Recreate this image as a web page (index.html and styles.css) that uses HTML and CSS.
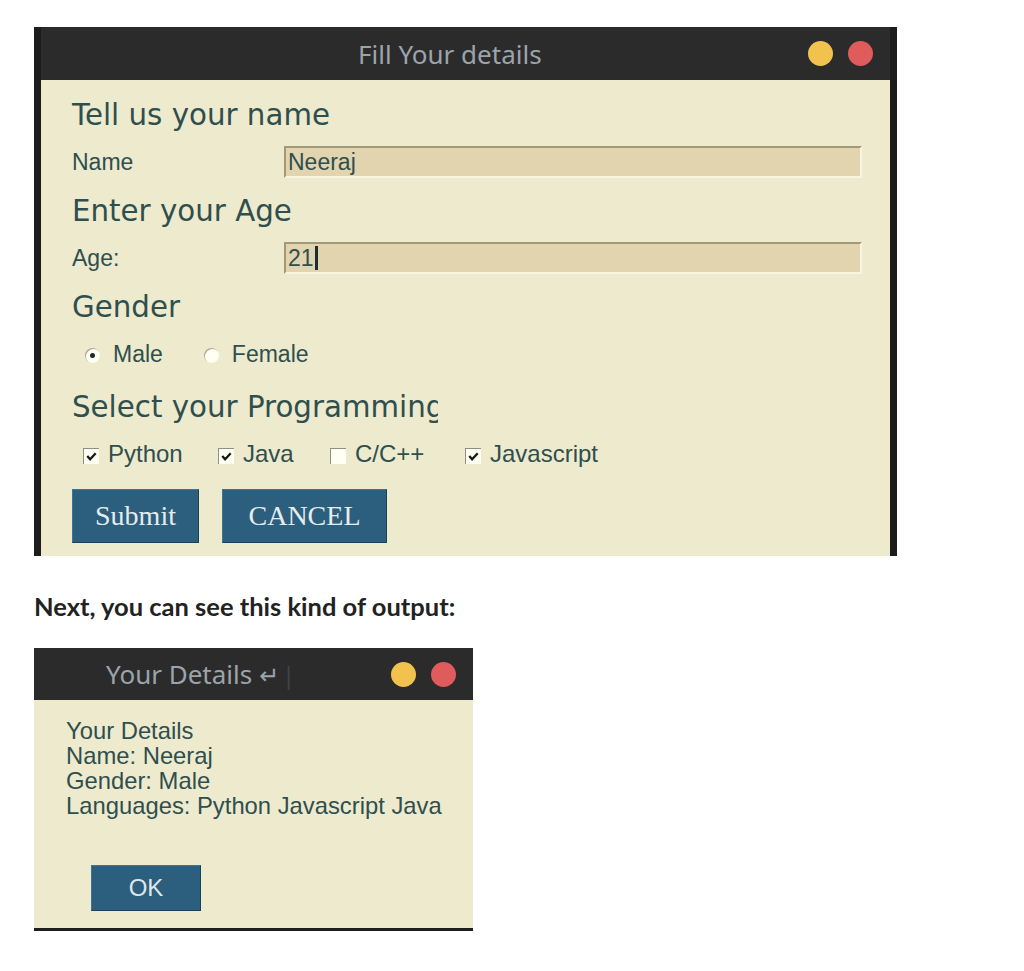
FILE: index.html
```html
<!DOCTYPE html>
<html lang="en">
<head>
    <meta charset="UTF-8">
    <title>Fill Your details</title>
    <link rel="stylesheet" href="styles.css">
</head>
<body>
    <div class="page">
        <div class="window main-window">
            <div class="titlebar">
                <span class="title">Fill Your details</span>
                <span class="dots"><i class="dot yellow"></i><i class="dot red"></i></span>
            </div>
            <div class="form">
                <div class="heading">Tell us your name</div>
                <div class="row">
                    <span class="label">Name</span>
                    <div class="entry">Neeraj</div>
                </div>

                <div class="heading">Enter your Age</div>
                <div class="row">
                    <span class="label">Age:</span>
                    <div class="entry">21<span class="caret"></span></div>
                </div>

                <div class="heading">Gender</div>
                <div class="row radios">
                    <label class="option"><span class="radio checked"></span>Male</label>
                    <label class="option"><span class="radio"></span>Female</label>
                </div>

                <div class="heading clipped">Select your Programming</div>
                <div class="row checks">
                    <label class="option"><span class="check on"><svg viewBox="0 0 16 16"><path d="M3.5 7.5 L6.5 11 L12.5 4.5"/></svg></span>Python</label>
                    <label class="option"><span class="check on"><svg viewBox="0 0 16 16"><path d="M3.5 7.5 L6.5 11 L12.5 4.5"/></svg></span>Java</label>
                    <label class="option"><span class="check"></span>C/C++</label>
                    <label class="option"><span class="check on"><svg viewBox="0 0 16 16"><path d="M3.5 7.5 L6.5 11 L12.5 4.5"/></svg></span>Javascript</label>
                </div>

                <div class="buttons">
                    <button class="btn submit">Submit</button>
                    <button class="btn cancel">CANCEL</button>
                </div>
            </div>
        </div>

        <p class="note">Next, you can see this kind of output:</p>

        <div class="window result-window">
            <div class="titlebar">
                <span class="title">Your Details <span class="enter">↵</span><span class="bar">|</span></span>
                <span class="dots"><i class="dot yellow"></i><i class="dot red"></i></span>
            </div>
            <div class="result">
                <div class="lines">
                    <div>Your Details</div>
                    <div>Name: Neeraj</div>
                    <div>Gender: Male</div>
                    <div>Languages: Python Javascript Java</div>
                </div>
                <button class="ok">OK</button>
            </div>
        </div>
    </div>
</body>
</html>
```

FILE: styles.css
```css
body {
    margin: 0;
    background-color: #ffffff;
    font-family: 'Liberation Sans', Arial, sans-serif;
}

.page {
    padding: 27px 0 0 34px;
}

.window {
    box-sizing: border-box;
}

.main-window {
    width: 863px;
    border-left: 7px solid #1c1c1c;
    border-right: 7px solid #1c1c1c;
}

.titlebar {
    display: flex;
    align-items: center;
    justify-content: space-between;
    background-color: #2b2b2b;
    height: 53px;
}

.title {
    font-family: 'Noto Sans', sans-serif;
    font-size: 26px;
    color: #9da3ab;
    padding-left: 317px;
    white-space: nowrap;
}

.dots {
    display: flex;
    gap: 15px;
    margin-right: 17px;
}

.dot {
    display: block;
    width: 25px;
    height: 25px;
    border-radius: 50%;
}

.dot.yellow {
    background-color: #f2c24f;
}

.dot.red {
    background-color: #e05b5b;
}

.form {
    background-color: #eeeacd;
    padding: 15px 28px 13px 31px;
    height: 476px;
    box-sizing: border-box;
}

.heading {
    font-family: 'DejaVu Sans', sans-serif;
    font-size: 29.3px;
    color: #2f4f4f;
    height: 40px;
    line-height: 40px;
    white-space: nowrap;
}

.heading.clipped {
    margin-top: 4px;
    width: 366px;
    overflow: hidden;
}

.row {
    display: flex;
    align-items: center;
    height: 56px;
    padding-bottom: 2px;
    box-sizing: border-box;
    font-size: 23px;
    color: #2f4f4f;
}

.label {
    width: 212px;
    flex: none;
}

.entry {
    width: 578px;
    height: 32px;
    box-sizing: border-box;
    border: 2px solid;
    border-color: #a59877 #f8f4e0 #f8f4e0 #a59877;
    background-color: #e2d4ae;
    padding-left: 2px;
    line-height: 27px;
    display: flex;
    align-items: center;
}

.caret {
    display: inline-block;
    width: 3px;
    height: 24px;
    background-color: #1e2e2e;
    margin-left: 1px;
}

.option {
    display: flex;
    align-items: center;
}

.radios {
    padding-left: 13px;
    gap: 41px;
}

.radios .option {
    gap: 13px;
}

.radio {
    width: 15px;
    height: 15px;
    border-radius: 50%;
    background-color: #fffff2;
    box-shadow: inset 1px 1px 0 #a6a699;
    display: flex;
    align-items: center;
    justify-content: center;
    margin-top: 3px;
}

.radio.checked::after {
    content: '';
    width: 5px;
    height: 5px;
    border-radius: 50%;
    background-color: #1a2a2a;
}

.checks {
    display: grid;
    grid-template-columns: 135px 112px 135px auto;
    padding-left: 11px;
    font-size: 24px;
}

.checks .option {
    gap: 9px;
}

.check {
    width: 16px;
    height: 16px;
    box-sizing: border-box;
    background-color: #fffff2;
    border-top: 1px solid #8f8f86;
    border-left: 1px solid #8f8f86;
    margin-top: 3px;
}

.check svg {
    display: block;
    width: 15px;
    height: 15px;
    fill: none;
    stroke: #111a1a;
    stroke-width: 2.4;
}

.buttons {
    display: flex;
    gap: 23px;
    margin-top: 6px;
}

.btn {
    height: 54px;
    font-family: 'Liberation Serif', 'Times New Roman', serif;
    font-size: 28px;
    color: #e6ecee;
    background-color: #2b5f7d;
    border: 1px solid;
    border-color: #3b7595 #1b4158 #1b4158 #3b7595;
    padding: 0;
}

.submit {
    width: 127px;
}

.cancel {
    width: 165px;
}

.note {
    font-family: 'Lato', sans-serif;
    font-weight: bold;
    font-size: 25.5px;
    line-height: 28px;
    color: #222222;
    margin: 36px 0 28px 0;
}

.result-window {
    width: 439px;
}

.result-window .titlebar {
    height: 52px;
}

.result-window .title {
    padding-left: 72px;
}

.enter {
    font-family: 'DejaVu Sans', sans-serif;
    font-size: 24px;
}

.bar {
    color: #444444;
    font-size: 24px;
    margin-left: 3px;
}

.result {
    background-color: #eeeacd;
    padding: 18px 0 17px 32px;
    border-bottom: 3px solid #1e1e1e;
}

.lines {
    font-size: 23.8px;
    line-height: 25px;
    color: #2f4f4f;
}

.ok {
    display: block;
    margin: 47px 0 0 25px;
    width: 110px;
    height: 46px;
    font-family: 'Liberation Sans', Arial, sans-serif;
    font-size: 24px;
    color: #dfe7eb;
    background-color: #2b5f7d;
    border: 1px solid;
    border-color: #3b7595 #1b4158 #1b4158 #3b7595;
    padding: 0;
}
```
